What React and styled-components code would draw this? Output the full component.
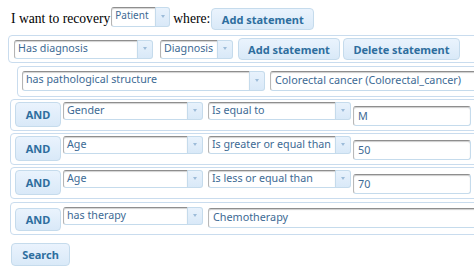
import React from "react"
import styled, { createGlobalStyle } from "styled-components"

const GlobalStyle = createGlobalStyle`
  html, body {
    margin: 0;
    padding: 0;
    background: #fff;
    overflow: hidden;
  }
  body {
    font-family: "Liberation Serif", "Times New Roman", serif;
  }
`

const Page = styled.div`
  padding: 7px 0 0 8px;
  width: 540px;
`

const Header = styled.div`
  display: flex;
  align-items: flex-start;
  height: 23px;
`

const Phrase = styled.span`
  color: #000;
  font-size: 13.6px;
  line-height: 16px;
  margin: 4px ${p => p.$right || 0}px 0 ${p => p.$left || 0}px;
  white-space: nowrap;
`

const Panel = styled.div`
  align-items: ${p => p.$align || "flex-start"};
  border: 1px solid #c9dcee;
  border-radius: 4px;
  box-sizing: border-box;
  display: flex;
  gap: ${p => p.$gap || 5}px;
  margin: ${p => p.$top || 0}px 0 0 ${p => p.$indent || 0}px;
  padding: ${p => p.$pad};
  width: 520px;
`

const Combo = styled.div`
  display: flex;
  flex: none;
  height: ${p => p.$h || 19}px;
  margin-left: ${p => p.$left || 0}px;
  margin-top: ${p => p.$top || 0}px;
`

const ComboInput = styled.div`
  background: #fff;
  border: 1px solid #c5dbec;
  border-left-color: #b4b4b4;
  border-radius: 3px 0 0 3px;
  border-top-color: #8e8e8e;
  box-shadow: inset 0 1px 1px rgba(0, 0, 0, 0.18);
  box-sizing: border-box;
  color: #3d6a94;
  font-family: "Noto Sans", "Open Sans", sans-serif;
  font-size: ${p => p.$fs || 10.7}px;
  line-height: 14px;
  overflow: hidden;
  padding: 0 3px;
  text-align: left;
  white-space: nowrap;
  width: ${p => p.$w}px;
`

const ComboArrow = styled.div`
  align-items: center;
  background: linear-gradient(#e8f2fc, #d9e9f8);
  border: 1px solid #c5dbec;
  border-left: none;
  border-radius: 0 3px 3px 0;
  box-sizing: border-box;
  display: flex;
  justify-content: center;
  padding-bottom: 2px;
  width: ${p => p.$w || 15}px;

  &::after {
    border-left: 2.5px solid transparent;
    border-right: 2.5px solid transparent;
    border-top: 3px solid #9dbcd9;
    content: "";
  }
`

const Field = styled.div`
  background: #fff;
  border: 1px solid #c5dbec;
  border-left-color: #b8b8b8;
  border-radius: 3px;
  border-top-color: #8e8e8e;
  box-shadow: inset 0 1px 1px rgba(0, 0, 0, 0.2);
  box-sizing: border-box;
  color: #3d6a94;
  flex: none;
  font-family: "Noto Sans", "Open Sans", sans-serif;
  font-size: 10.8px;
  height: ${p => p.$h || 20}px;
  line-height: ${p => p.$lh || 16}px;
  margin-left: ${p => p.$left || 0}px;
  margin-top: ${p => p.$top || 0}px;
  overflow: hidden;
  padding: 0 4px;
  text-align: left;
  white-space: nowrap;
  width: ${p => p.$w}px;
`

const Button = styled.button`
  background: linear-gradient(#eaf3fd, #d9e9f8);
  border: 1px solid #c5dbec;
  border-radius: 4px;
  box-sizing: border-box;
  color: #2e6e9e;
  cursor: pointer;
  flex: none;
  font-family: "Noto Sans", "Open Sans", sans-serif;
  font-size: 11px;
  font-weight: bold;
  height: ${p => p.$h || 22}px;
  margin: ${p => p.$m || 0};
  padding: 0;
  width: ${p => p.$w}px;
`

const ComboBox = ({ label, w, h, top, left, fs, arrow }) => (
  <Combo $h={h} $top={top} $left={left}>
    <ComboInput $w={w} $fs={fs}>{label}</ComboInput>
    <ComboArrow $w={arrow} />
  </Combo>
)

const conditions = [
  { property: "Gender", op: "Is equal to", value: "M" },
  { property: "Age", op: "Is greater or equal than", value: "50" },
  { property: "Age", op: "Is less or equal than", value: "70" },
]

const AndRow = ({ property, op, value }) => (
  <Panel $top={2} $indent={2} $gap={2} $pad="2px 4px 3px 4px">
    <Button $w={46} $h={25}>AND</Button>
    <ComboBox label={property} w={125} h={18} />
    <ComboBox label={op} w={128} h={18} left={3} />
    <Field $w={118} $top={4} $lh={18}>{value}</Field>
  </Panel>
)

const TherapyRow = () => (
  <Panel $top={3} $indent={2} $gap={2} $pad="3px 4px 3px 4px">
    <Button $w={46} $h={23} $m="2px 0 0 0">AND</Button>
    <ComboBox label="has therapy" w={125} h={18} top={1} />
    <Field $w={300} $top={2} $lh={16} $left={3}>Chemotherapy</Field>
  </Panel>
)

export default function App() {
  return (
    <>
      <GlobalStyle />
      <Page>
        <Header>
          <Phrase $left={3}>I want to recovery</Phrase>
          <ComboBox label="Patient" w={45} arrow={14} h={20} fs={10} left={1} />
          <Phrase $left={3} $right={1}>where:</Phrase>
          <Button $w={103} $h={22} $m="1px 0 0 0">Add statement</Button>
        </Header>

        <Panel $top={5} $align="center" $gap={7} $pad="2px 5px">
          <ComboBox label="Has diagnosis" w={124} />
          <ComboBox label="Diagnosis" w={58} />
          <Button $w={102} $m="0 0 0 -2px">Add statement</Button>
          <Button $w={117} $m="0 0 0 -4px">Delete statement</Button>
        </Panel>

        <Panel $top={3} $indent={9} $pad="4px 4px 5px 4px">
          <ComboBox label="has pathological structure" w={228} h={20} />
          <Field $w={260} $h={20}>Colorectal cancer (Colorectal_cancer)</Field>
        </Panel>

        {conditions.map((c, i) => (
          <AndRow key={i} {...c} />
        ))}
        <TherapyRow />

        <Button $w={59} $h={23} $m="8px 0 0 3px">Search</Button>
      </Page>
    </>
  )
}
